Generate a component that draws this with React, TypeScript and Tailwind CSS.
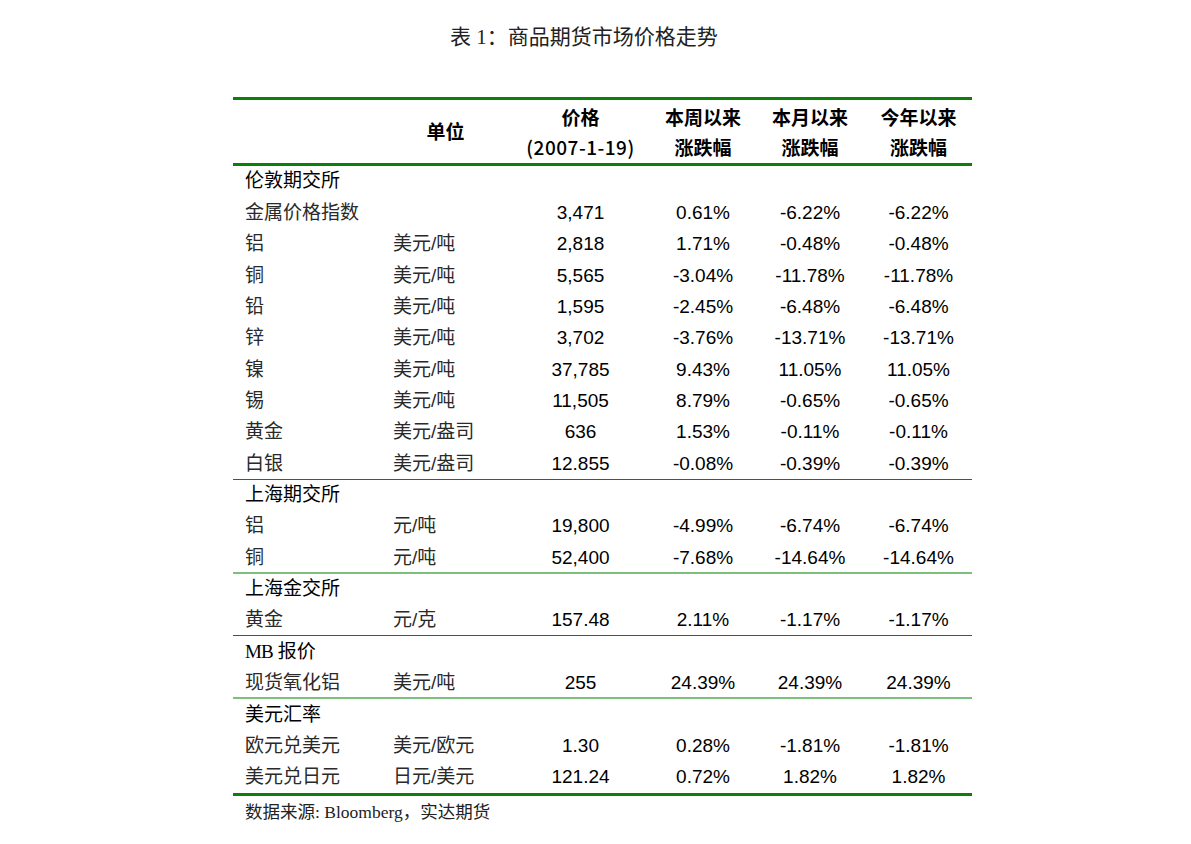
type Row = [string, string, string, string, string, string];

type Section = {
  title: string;
  rows: Row[];
  line: string;
};

const SECTIONS: Section[] = [
  {
    title: "伦敦期交所",
    line: "shadow-[inset_0_-1px_0_#0a800a]",
    rows: [
      ["金属价格指数", "", "3,471", "0.61%", "-6.22%", "-6.22%"],
      ["铝", "美元/吨", "2,818", "1.71%", "-0.48%", "-0.48%"],
      ["铜", "美元/吨", "5,565", "-3.04%", "-11.78%", "-11.78%"],
      ["铅", "美元/吨", "1,595", "-2.45%", "-6.48%", "-6.48%"],
      ["锌", "美元/吨", "3,702", "-3.76%", "-13.71%", "-13.71%"],
      ["镍", "美元/吨", "37,785", "9.43%", "11.05%", "11.05%"],
      ["锡", "美元/吨", "11,505", "8.79%", "-0.65%", "-0.65%"],
      ["黄金", "美元/盎司", "636", "1.53%", "-0.11%", "-0.11%"],
      ["白银", "美元/盎司", "12.855", "-0.08%", "-0.39%", "-0.39%"],
    ],
  },
  {
    title: "上海期交所",
    line: "shadow-[inset_0_-2px_0_#7dbf7d]",
    rows: [
      ["铝", "元/吨", "19,800", "-4.99%", "-6.74%", "-6.74%"],
      ["铜", "元/吨", "52,400", "-7.68%", "-14.64%", "-14.64%"],
    ],
  },
  {
    title: "上海金交所",
    line: "shadow-[inset_0_-1px_0_#0a800a]",
    rows: [["黄金", "元/克", "157.48", "2.11%", "-1.17%", "-1.17%"]],
  },
  {
    title: "MB",
    line: "shadow-[inset_0_-2px_0_#7dbf7d]",
    rows: [["现货氧化铝", "美元/吨", "255", "24.39%", "24.39%", "24.39%"]],
  },
  {
    title: "美元汇率",
    line: "",
    rows: [
      ["欧元兑美元", "美元/欧元", "1.30", "0.28%", "-1.81%", "-1.81%"],
      ["美元兑日元", "日元/美元", "121.24", "0.72%", "1.82%", "1.82%"],
    ],
  },
];

function DataRow({ row }: { row: Row }) {
  const [name, unit, price, week, month, year] = row;
  return (
    <div className="flex h-[31.37px] items-center">
      <div className="w-[148px] pl-3 text-[#2a2a2a]">{name}</div>
      <div className="w-[129px] pl-3 text-[#2a2a2a]">{unit}</div>
      <div className="w-[141px] text-center text-black">{price}</div>
      <div className="w-[104px] text-center text-black">{week}</div>
      <div className="w-[110px] text-center text-black">{month}</div>
      <div className="w-[107px] text-center text-black">{year}</div>
    </div>
  );
}

function SectionBlock({ section }: { section: Section }) {
  return (
    <div className={section.line}>
      <div className="flex h-[31.37px] items-center pl-3 text-black">
        {section.title === "MB" ? (
          <span>
            <span className="font-['Liberation_Serif',serif] tracking-[-1px]">MB</span> 报价
          </span>
        ) : (
          section.title
        )}
      </div>
      {section.rows.map((r, i) => (
        <DataRow key={i} row={r} />
      ))}
    </div>
  );
}

export default function App() {
  return (
    <div className="min-h-[844px] w-[1191px] bg-white font-['Liberation_Sans','Noto_Sans_CJK_SC',sans-serif] text-[19px]">
      <div className="h-[51px] pl-[450px] pt-[23px] font-['Liberation_Serif','Noto_Sans_CJK_SC',serif] text-[21px] leading-[28px] text-[#222]">
        表 1：商品期货市场价格走势
      </div>

      <div className="ml-[233px] mt-[46px] w-[739px]">
        <div className="flex h-[69px] border-y-[3px] border-[#0a800a] font-['Noto_Sans_CJK_SC',sans-serif] font-bold text-black">
          <div className="w-[148px]" />
          <div className="flex w-[129px] items-center justify-center">单位</div>
          <div className="flex w-[141px] flex-col items-center justify-center gap-[8px] leading-[22px]">
            <span>价格</span>
            <span className="font-medium tracking-[0.5px]">(2007-1-19)</span>
          </div>
          <div className="flex w-[104px] flex-col items-center justify-center gap-[8px] leading-[22px]">
            <span>本周以来</span>
            <span>涨跌幅</span>
          </div>
          <div className="flex w-[110px] flex-col items-center justify-center gap-[8px] leading-[22px]">
            <span>本月以来</span>
            <span>涨跌幅</span>
          </div>
          <div className="flex w-[107px] flex-col items-center justify-center gap-[8px] leading-[22px]">
            <span>今年以来</span>
            <span>涨跌幅</span>
          </div>
        </div>

        <div className="border-b-[3px] border-[#0a800a]">
          {SECTIONS.map((s) => (
            <SectionBlock key={s.title} section={s} />
          ))}
        </div>

        <div className="mt-[4px] pl-3 font-['Liberation_Serif','Noto_Sans_CJK_SC',serif] text-[17.5px] leading-[24px] text-[#222]">
          数据来源: Bloomberg，实达期货
        </div>
      </div>
    </div>
  );
}
